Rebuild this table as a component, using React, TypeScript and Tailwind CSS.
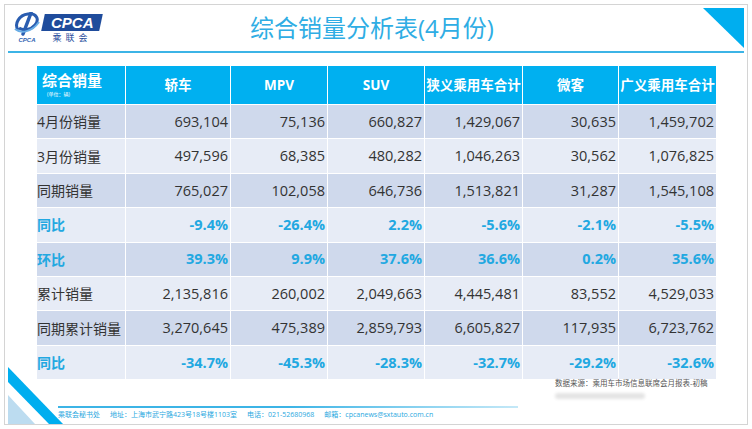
import React from "react"

const font = { fontFamily: '"Open Sans", "Noto Sans CJK SC", sans-serif' }

type Row = { label: string; values: string[]; pct?: boolean }

const heads = ["轿车", "MPV", "SUV", "狭义乘用车合计", "微客", "广义乘用车合计"]

const rows: Row[] = [
  { label: "4月份销量", values: ["693,104", "75,136", "660,827", "1,429,067", "30,635", "1,459,702"] },
  { label: "3月份销量", values: ["497,596", "68,385", "480,282", "1,046,263", "30,562", "1,076,825"] },
  { label: "同期销量", values: ["765,027", "102,058", "646,736", "1,513,821", "31,287", "1,545,108"] },
  { label: "同比", values: ["-9.4%", "-26.4%", "2.2%", "-5.6%", "-2.1%", "-5.5%"], pct: true },
  { label: "环比", values: ["39.3%", "9.9%", "37.6%", "36.6%", "0.2%", "35.6%"], pct: true },
  { label: "累计销量", values: ["2,135,816", "260,002", "2,049,663", "4,445,481", "83,552", "4,529,033"] },
  { label: "同期累计销量", values: ["3,270,645", "475,389", "2,859,793", "6,605,827", "117,935", "6,723,762"] },
  { label: "同比", values: ["-34.7%", "-45.3%", "-28.3%", "-32.7%", "-29.2%", "-32.6%"], pct: true },
]

function Logo() {
  return (
    <div className="flex items-center gap-[2px]">
      <svg width="28" height="32" viewBox="0 0 28 32">
        <path d="M5 18 C 1 12, 6 3, 15 2 C 23 1, 27 7, 22 13 C 18 18, 10 19, 6 16" fill="none" stroke="#2a5db0" strokeWidth="3" />
        <path d="M18 1 L10 22" stroke="#2a5db0" strokeWidth="3.5" strokeLinecap="round" />
        <path d="M2 17 C 8 22, 19 20, 26 10" stroke="#6aaee6" strokeWidth="2" fill="none" />
        <text x="14" y="30" fontSize="6" fontStyle="italic" fontWeight="700" fill="#2a5db0" textAnchor="middle" fontFamily="Liberation Sans, sans-serif">CPCA</text>
      </svg>
      <div className="flex flex-col items-center">
        <div className="h-[17px] w-[58px] bg-[#1f4c9c] flex items-center justify-center -skew-x-12">
          <span className="text-white italic font-bold text-[15px] leading-none skew-x-12" style={{ fontFamily: '"Liberation Sans", sans-serif' }}>CPCA</span>
        </div>
        <span className="text-[9px] leading-none mt-[2px] tracking-[4px] text-[#1f4c9c]" style={{ fontFamily: '"Noto Sans CJK SC", sans-serif' }}>乘联会</span>
      </div>
    </div>
  )
}

export default function App() {
  return (
    <div className="w-[752px] h-[429px] bg-white p-[4px]" style={font}>
      <div className="relative h-full border border-[#d4d4d4] flex flex-col overflow-hidden">
        {/* top-right corner */}
        <div className="absolute right-[3px] top-[3px] w-[41px] h-[40px] bg-[#00aeef] [clip-path:polygon(0_0,100%_0,100%_100%)]" />

        {/* bottom-left stripes */}
        <svg className="absolute left-0 bottom-0" width="60" height="62" viewBox="0 0 60 62">
          <polygon points="3,5 3,20 44,62 58,62" fill="#00aeef" />
          <polygon points="3,33 3,62 30,62" fill="#bcdcf0" />
        </svg>

        {/* header */}
        <div className="h-[46px] flex items-center pl-[8px] relative">
          <Logo />
          <div className="absolute inset-0 flex items-center justify-center pr-[8px]">
            <span className="text-[24px] text-[#2fade4] leading-none">综合销量分析表(4月份)</span>
          </div>
        </div>
        <div className="h-[2px] bg-[#3cb4e6] mx-[3px]" />

        {/* table */}
        <div className="ml-[32px] mt-[13px] w-[679px] grid grid-cols-[89px_105px_97px_97px_98px_96px_97px]">
          <div className="h-[38px] bg-[#00b0f0] flex flex-col justify-center pl-[5px] border-r border-white">
            <span className="text-white font-bold text-[15px] leading-none">综合销量</span>
            <span className="text-white text-[5px] leading-none mt-[4px] pl-[5px]">(单位：辆)</span>
          </div>
          {heads.map((h, i) => (
            <div key={h} className={`h-[38px] bg-[#00b0f0] flex items-center justify-center text-white font-bold text-[13.5px] whitespace-nowrap ${i < 5 ? "border-r border-white" : ""}`}>
              {h}
            </div>
          ))}
          {rows.map((r, ri) => {
            const bg = ri % 2 === 0 ? "bg-[#cfd9ec]" : "bg-[#e7ecf6]"
            const color = r.pct ? "text-[#22a8e1] font-bold" : "text-[#333333]"
            return (
              <React.Fragment key={ri}>
                <div className={`h-[34.4px] ${bg} flex items-center text-[14px] whitespace-nowrap border-r border-t border-white ${color}`}>
                  {r.label}
                </div>
                {r.values.map((v, vi) => (
                  <div key={vi} className={`h-[34.4px] ${bg} flex items-center justify-end pr-[2px] text-[14.5px] border-t border-white ${vi < 5 ? "border-r" : ""} ${color}`}>
                    {v}
                  </div>
                ))}
              </React.Fragment>
            )
          })}
        </div>

        {/* source */}
        <div className="flex justify-end pr-[32px]">
          <div className="flex flex-col items-start w-[160px]">
            <span className="text-[7.5px] text-[#555555] leading-none mt-[1px]">数据来源：乘用车市场信息联席会月报表-初稿</span>
            <div className="mt-[5px] h-[6px] w-[90px] rounded-full bg-[#e4e4e4] blur-[1.5px]" />
          </div>
        </div>

        {/* footer */}
        <div className="mt-auto mb-[6px] ml-[53px]">
          <div className="h-[2px] w-[460px] bg-gradient-to-r from-[#3cb4e6] via-[#3cb4e6] to-[#3cb4e6]/30" />
          <div className="mt-[3px] text-[7px] leading-none text-[#2aa8e0] whitespace-nowrap flex gap-[10px]">
            <span>乘联会秘书处</span>
            <span>地址：上海市武宁路423号18号楼1103室</span>
            <span>电话：021-52680968</span>
            <span>邮箱：cpcanews@sxtauto.com.cn</span>
          </div>
        </div>
      </div>
    </div>
  )
}
